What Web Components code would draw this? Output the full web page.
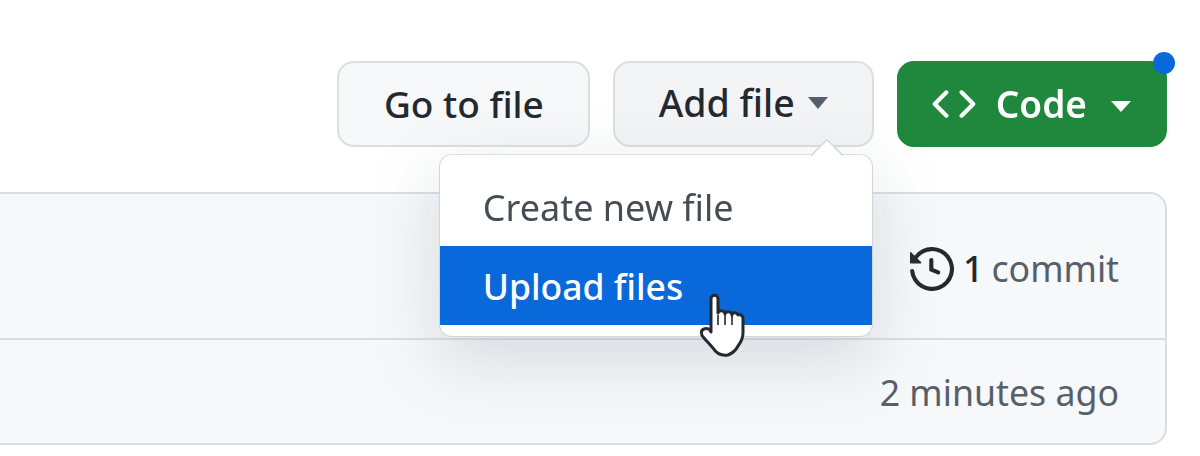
<!DOCTYPE html>
<html lang="en"><head><meta charset="utf-8"><title>Repository file actions</title>
<style>html,body{margin:0;background:#fff;overflow:hidden}body{font-family:"Noto Sans","Open Sans",sans-serif;}</style>
</head><body>
<repo-view>
  <repo-toolbar>
    <repo-button>Go to file</repo-button>
    <repo-add-file>
      <repo-button hover caret>Add file</repo-button>
      <repo-menu slot="menu">
        <repo-menu-item>Create new file</repo-menu-item>
        <repo-menu-item active>Upload files</repo-menu-item>
      </repo-menu>
    </repo-add-file>
    <repo-button primary caret dot>Code</repo-button>
  </repo-toolbar>
  <repo-panel>
    <repo-row tall><repo-commits count="1"></repo-commits></repo-row>
    <repo-row>2 minutes ago</repo-row>
  </repo-panel>
</repo-view>
<script>
const def=(name,html,setup)=>customElements.define(name,class extends HTMLElement{
  constructor(){super();this.attachShadow({mode:'open'}).innerHTML=html;}
  connectedCallback(){setup&&setup(this)}
});
def('repo-view',`<style>:host{display:block;position:relative;width:1200px;height:456px;overflow:hidden;padding-top:61px;box-sizing:border-box;filter:blur(.7px)}
svg{position:absolute;left:680px;top:280px;width:80px;height:80px;z-index:5}</style>
<slot></slot>
<svg viewBox="0 0 80 80" aria-hidden="true"><path d="M31 48V19c0-5 7-5 7 0v14c0-3 7-3 7 1 0-3 7-3 7 1 0-3 5-3 6 0 2-1 5 0 5 4v14c0 5-2 9-5 13-2 4-5 7-10 9-7 1-12-2-15-7l-9-10c-4-4-3-8 0-9 3-1 6 0 7 3z" fill="#fff" stroke="#24292f" stroke-width="3" stroke-linejoin="round"/><path d="M38 35v10M45 35v10M52 36v9" stroke="#24292f" stroke-width="1.6" fill="none"/></svg>`);
def('repo-toolbar',`<style>:host{display:flex;justify-content:flex-end;gap:23px;padding-right:33px;height:86px}</style><slot></slot>`);
def('repo-add-file',`<style>:host{display:block;position:relative}.m{position:absolute;right:1px;top:93px;z-index:3}</style><slot></slot><div class="m"><slot name="menu"></slot></div>`);
def('repo-button',`<style>
:host{display:block;height:86px}
.b{display:flex;align-items:center;box-sizing:border-box;height:86px;padding:0 44px 2px 45px;border:2px solid #dcdee1;border-radius:17px;background:#f6f8fa;color:#24292f;font:470 37px/1 "Noto Sans","Open Sans",sans-serif;position:relative;white-space:nowrap}
:host([hover]) .b{background:#f3f4f6;padding:0 44px 2px 44px;font-size:37.5px}
:host([primary]) .b{background:#1f883d;border-color:#1f883d;color:#fff;font-weight:600;padding:0 34px 2px 33px}
.code,.caret,.dot{display:none}
:host([primary]) .code{display:block;width:44px;height:44px;margin:2px 20px 0 0;fill:#fff}
:host([caret]) .caret{display:block;width:0;height:0;border:10.5px solid transparent;border-top:12px solid #57606a;border-bottom:0;margin:0 0 0 13px}
:host([primary]) .caret{border-width:11px 10px 0;border-top-color:#fff;margin:7px 0 0 24px}
:host([dot]) .dot{display:block;position:absolute;right:-10px;top:-11px;width:22px;height:22px;border-radius:50%;background:#0969da}
</style><div class="b"><svg class="code" viewBox="0 0 16 16"><path d="m11.28 3.22 4.25 4.25a.75.75 0 0 1 0 1.06l-4.25 4.25a.749.749 0 0 1-1.275-.326.749.749 0 0 1 .215-.734L13.94 8l-3.72-3.72a.749.749 0 0 1 .326-1.275.749.749 0 0 1 .734.215Zm-6.56 0a.751.751 0 0 1 1.042.018.751.751 0 0 1 .018 1.042L2.06 8l3.72 3.72a.749.749 0 0 1-.326 1.275.749.749 0 0 1-.734-.215L.47 8.53a.75.75 0 0 1 0-1.06Z"/></svg><slot></slot><span class="caret"></span><span class="dot"></span></div>`);
def('repo-menu',`<style>
:host{display:block;box-sizing:border-box;width:434px;height:183px;padding:12px 0 0;background:#fff;border:1px solid #cfd6dc;border-top-color:#dbe0e5;border-radius:13px;box-shadow:0 22px 66px rgba(140,149,159,.3);position:relative}
.a{position:absolute;right:33px;top:-12px;width:22px;height:22px;background:#fff;transform:rotate(45deg);border-left:2px solid #d5dbe1;border-top:2px solid #d5dbe1;border-top-left-radius:3px}
</style><div class="a"></div><slot></slot>`);
def('repo-menu-item',`<style>
:host{display:flex;align-items:center;height:79px;padding:2px 41px 0 43px;box-sizing:border-box;font:400 36px/1 "Noto Sans","Open Sans",sans-serif;color:#444c54;position:relative}
:host([active]){background:#0969da;color:#fff;font-weight:500;font-size:35.5px}
</style><slot></slot>`);
def('repo-panel',`<style>:host{display:block;margin:45px 33px 0 -20px;border:2px solid #d8dee4;border-radius:17px;background:#f6f8fa;box-sizing:border-box;height:253px;overflow:hidden}</style><slot></slot>`);
def('repo-row',`<style>
:host{display:flex;align-items:center;justify-content:flex-end;height:103px;box-sizing:border-box;padding:3px 46px 0 0;font:400 35.7px/1 "Noto Sans","Open Sans",sans-serif;color:#57606a}
:host([tall]){height:146px;border-bottom:2px solid #d8dee4;padding-top:5px}
</style><slot></slot>`);
def('repo-commits',`<style>
:host{display:flex;align-items:center;color:#57606a;white-space:nowrap}
svg{width:44px;height:44px;fill:#24292f;margin-right:9px}b{font-weight:500;color:#24292f;margin-right:8px}
</style><svg viewBox="0 0 16 16"><path d="m.427 1.927 1.215 1.215a8.002 8.002 0 1 1-1.6 5.685.75.75 0 1 1 1.493-.154 6.5 6.5 0 1 0 1.18-4.458l1.358 1.358A.25.25 0 0 1 3.896 6H.25A.25.25 0 0 1 0 5.75V2.104a.25.25 0 0 1 .427-.177ZM7.75 4a.75.75 0 0 1 .75.75v2.992l2.028.812a.75.75 0 0 1-.557 1.392l-2.5-1A.751.751 0 0 1 7 8.25v-3.5A.75.75 0 0 1 7.75 4Z"/></svg><b>1</b><span>commit</span>`);
</script>
</body></html>
